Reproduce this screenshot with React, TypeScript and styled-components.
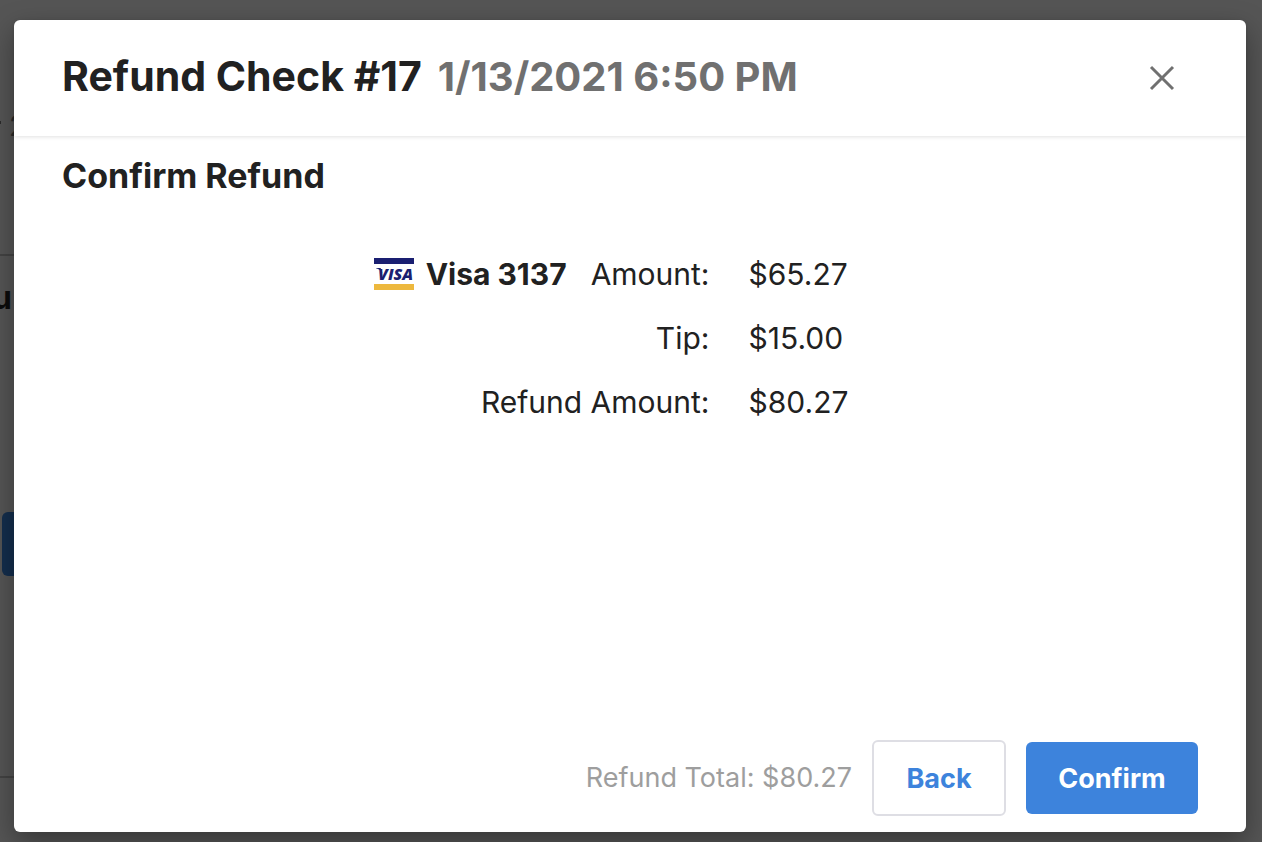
import React from "react";
import styled, { createGlobalStyle } from "styled-components";

const GlobalStyle = createGlobalStyle`
  *, *::before, *::after { box-sizing: border-box; }
  body {
    margin: 0;
    background: #555;
    color: #212121;
    font-family: Inter, "Liberation Sans", sans-serif;
    font-size: 30px;
    line-height: 40px;
  }
`;

const Screen = styled.div`
  position: relative;
  min-height: 100vh;
  overflow: hidden;
  padding: 20px 16px 10px 14px;
  display: flex;
`;

const Backdrop = styled.div`
  position: absolute;
  inset: 0 50% 0 0;
  overflow: hidden;
`;

const BackdropSection = styled.section<{ $height: number }>`
  height: ${(p) => p.$height}px;
  border-bottom: 2px solid #434343;
`;

const BackdropMeta = styled.p`
  margin: 0;
  padding: 106px 0 0;
  font-size: 28px;
  color: #2b2b2b;
  display: flex;
  gap: 8px;
`;

const MetaMark = styled.span`
  width: 1px;
  height: 3px;
  margin-top: 15px;
  background: #2b2b2b;
`;

const BackdropHeading = styled.h3`
  margin: 0;
  padding-top: 22px;
  width: 12px;
  font-size: 32px;
  font-weight: 700;
  color: #0c0c0c;
  display: flex;
  justify-content: flex-end;
`;

const BackdropAction = styled.div`
  height: 64px;
  margin: 194px 0 0 2px;
  border-radius: 6px;
  background: #142e4d;
`;

const Dialog = styled.div`
  position: relative;
  flex: 1;
  display: flex;
  flex-direction: column;
  background: #fff;
  border-radius: 6px;
  box-shadow: 0 10px 28px rgba(0, 0, 0, 0.36);
`;

const Header = styled.header`
  display: flex;
  align-items: center;
  justify-content: space-between;
  height: 116px;
  padding: 0 64px 0 48px;
  border-radius: 6px 6px 0 0;
  box-shadow: 0 1px 4px rgba(0, 0, 0, 0.12);
`;

const Title = styled.h1`
  margin: 0;
  padding-bottom: 4px;
  font-size: 41px;
  line-height: 48px;
  font-weight: 700;
  display: flex;
  align-items: baseline;
  gap: 16px;
  white-space: nowrap;
`;

const Timestamp = styled.span`
  font-size: 40px;
  color: #707070;
`;

const CloseButton = styled.button`
  width: 40px;
  height: 40px;
  padding: 0;
  border: 0;
  background: none;
  color: #707070;
  cursor: pointer;
`;

const Body = styled.main`
  flex: 1;
  padding: 20px 48px;
`;

const Subtitle = styled.h2`
  margin: 0 0 46px;
  font-size: 34px;
  line-height: 40px;
  font-weight: 700;
`;

const Amounts = styled.table`
  width: 100%;
  table-layout: fixed;
  border-collapse: collapse;
`;

const Label = styled.th`
  width: 57%;
  height: 64px;
  padding: 0;
  text-align: right;
  font-weight: 400;
`;

const Value = styled.td`
  padding: 0 0 0 39px;
`;

const LabelLine = styled.span`
  display: flex;
  align-items: center;
  justify-content: flex-end;
`;

const CardName = styled.strong`
  margin: 0 24px 0 12px;
  font-weight: 700;
`;

const Footer = styled.footer`
  display: flex;
  align-items: center;
  justify-content: flex-end;
  gap: 20px;
  padding: 0 48px 16px;
`;

const Total = styled.span`
  font-size: 27px;
  color: #9e9e9e;
`;

const Button = styled.button<{ $primary?: boolean }>`
  height: ${(p) => (p.$primary ? 72 : 76)}px;
  width: ${(p) => (p.$primary ? 172 : 134)}px;
  padding: 0;
  border: ${(p) => (p.$primary ? "0" : "2px solid #dedee4")};
  border-radius: 6px;
  background: ${(p) => (p.$primary ? "#3d83dc" : "#fff")};
  color: ${(p) => (p.$primary ? "#fff" : "#3d83dc")};
  font-family: inherit;
  font-size: 27px;
  font-weight: 700;
  cursor: pointer;
`;

const VisaLogo = () => (
  <svg width="40" height="32" viewBox="0 0 40 32" aria-hidden="true">
    <rect width="40" height="32" fill="#fff" />
    <rect width="40" height="6" fill="#1a1f71" />
    <rect y="26" width="40" height="6" fill="#edb83d" />
    <path d="M2 10h4.6l1.8 5C7 12.5 5 11 2 10.3z" fill="#1a1f71" />
    <text
      x="4"
      y="22"
      fill="#1a1f71"
      fontFamily="Open Sans, sans-serif"
      fontSize="16"
      fontWeight="800"
      fontStyle="italic"
    >
      VISA
    </text>
  </svg>
);

export default function App() {
  return (
    <>
      <GlobalStyle />
      <Screen>
        <Backdrop aria-hidden="true">
          <BackdropSection $height={256}>
            <BackdropMeta>
              <MetaMark />
              <span>2</span>
            </BackdropMeta>
          </BackdropSection>
          <BackdropSection $height={522}>
            <BackdropHeading>u</BackdropHeading>
            <BackdropAction />
          </BackdropSection>
        </Backdrop>
        <Dialog role="dialog" aria-modal="true" aria-labelledby="refund-title">
          <Header>
            <Title id="refund-title">
              Refund Check #17 <Timestamp>1/13/2021 6:50 PM</Timestamp>
            </Title>
            <CloseButton type="button" aria-label="Close">
              <svg width="40" height="40" viewBox="0 0 40 40" aria-hidden="true">
                <path d="M9 9l22 22M31 9L9 31" stroke="currentColor" strokeWidth="3" />
              </svg>
            </CloseButton>
          </Header>
          <Body>
            <Subtitle>Confirm Refund</Subtitle>
            <Amounts>
              <tbody>
                <tr>
                  <Label scope="row">
                    <LabelLine>
                      <VisaLogo />
                      <CardName>Visa 3137</CardName>
                      Amount:
                    </LabelLine>
                  </Label>
                  <Value>$65.27</Value>
                </tr>
                <tr>
                  <Label scope="row">Tip:</Label>
                  <Value>$15.00</Value>
                </tr>
                <tr>
                  <Label scope="row">Refund Amount:</Label>
                  <Value>$80.27</Value>
                </tr>
              </tbody>
            </Amounts>
          </Body>
          <Footer>
            <Total>Refund Total: $80.27</Total>
            <Button type="button">Back</Button>
            <Button type="button" $primary>
              Confirm
            </Button>
          </Footer>
        </Dialog>
      </Screen>
    </>
  );
}
